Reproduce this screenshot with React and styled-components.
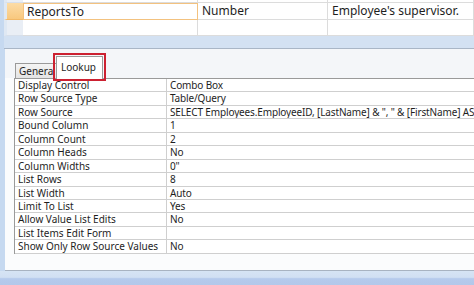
import React from 'react'
import styled, { createGlobalStyle } from 'styled-components'

const GlobalStyle = createGlobalStyle`
    html, body {
        margin: 0;
        padding: 0;
        background: #ffffff;
    }
    body {
        font-family: "Noto Sans", "Open Sans", sans-serif;
        color: #1e1e1e;
    }
`

const fields = [
    { name: '', type: '', desc: '', height: 3 },
    { name: 'ReportsTo', type: 'Number', desc: "Employee's supervisor.", height: 17, selected: true },
    { name: '', type: '', desc: '', height: 16 },
]

const properties = [
    ['Display Control', 'Combo Box'],
    ['Row Source Type', 'Table/Query'],
    ['Row Source', 'SELECT Employees.EmployeeID, [LastName] & ", " & [FirstName] AS'],
    ['Bound Column', '1'],
    ['Column Count', '2'],
    ['Column Heads', 'No'],
    ['Column Widths', '0"'],
    ['List Rows', '8'],
    ['List Width', 'Auto'],
    ['Limit To List', 'Yes'],
    ['Allow Value List Edits', 'No'],
    ['List Items Edit Form', ''],
    ['Show Only Row Source Values', 'No'],
]

export default function App() {
    return (
        <>
            <GlobalStyle />
            <Page>
                <Designer>
                    {fields.map((f, i) => (
                        <FieldRow key={i} $h={f.height}>
                            <Selector $selected={f.selected} />
                            <FieldCell $selected={f.selected}>{f.name}</FieldCell>
                            <FieldCell>{f.type}</FieldCell>
                            <FieldCell>{f.desc}</FieldCell>
                        </FieldRow>
                    ))}
                    <Spacer />
                </Designer>
                <PropertySheet>
                    <TabStrip>
                        <Tab>Genera</Tab>
                        <Tab $active>
                            Lookup
                            <Highlight />
                        </Tab>
                    </TabStrip>
                    <PropGrid>
                        {properties.map(([label, value]) => (
                            <PropRow key={label}>
                                <PropLabel>{label}</PropLabel>
                                <PropValue>{value}</PropValue>
                            </PropRow>
                        ))}
                    </PropGrid>
                </PropertySheet>
                <BottomBand />
            </Page>
        </>
    )
}

const Page = styled.div`
    width: 474px;
    height: 285px;
    overflow: hidden;
    display: flex;
    flex-direction: column;
    background: #c6d9f0;
    padding-left: 4px;
    box-sizing: border-box;
`

const Designer = styled.div`
    display: flex;
    flex-direction: column;
    background: #d5e3f3;
`

const FieldRow = styled.div`
    display: grid;
    grid-template-columns: 19px 175px 130px 1fr;
    height: ${p => p.$h}px;
    background: #ffffff;
`

const Selector = styled.div`
    background: ${p => p.$selected ? 'linear-gradient(#fcdca6, #f8c87e)' : '#e9eef5'};
    border-left: 3px solid #dfe8f3;
    border-bottom: 1px solid ${p => p.$selected ? '#f1b867' : '#d7dfea'};
`

const FieldCell = styled.div`
    font-size: 12px;
    line-height: 16px;
    padding-left: 4px;
    white-space: nowrap;
    overflow: hidden;
    border-right: 1px solid #dcdcdc;
    border-bottom: 1px solid #dcdcdc;
    ${p => p.$selected && `
        border: 1px solid #f3c27f;
        padding-left: 3px;
        line-height: 15px;
    `}
`

const Spacer = styled.div`
    height: 12px;
    background: #d3e1f2;
    border-bottom: 1px solid #a9b6c6;
`

const PropertySheet = styled.div`
    flex: 1;
    display: flex;
    flex-direction: column;
    margin-left: 1px;
    padding-left: 9px;
    background: #fbfcfd;
    border-bottom: 1px solid #a8b3c1;
`

const TabStrip = styled.div`
    display: flex;
    align-items: flex-end;
    height: 29px;
    background: #f4f6f9;
    margin-left: -9px;
    padding-left: 10px;
`

const Tab = styled.div`
    position: relative;
    font-size: 10px;
    line-height: ${p => p.$active ? '20px' : '14px'};
    height: ${p => p.$active ? '23px' : '15px'};
    padding: ${p => p.$active ? '0 6px 0 4px' : '0 0 0 3px'};
    width: ${p => p.$active ? 'auto' : '41px'};
    overflow: ${p => p.$active ? 'visible' : 'hidden'};
    box-sizing: border-box;
    border: 1px solid #9a9a9a;
    border-bottom: none;
    border-right: ${p => p.$active ? '1px solid #9a9a9a' : 'none'};
    background: ${p => p.$active ? '#ffffff' : 'linear-gradient(#f4f4f4, #e4e4e4)'};
    margin-bottom: ${p => p.$active ? '-1px' : '0'};
    z-index: ${p => p.$active ? 1 : 0};
    white-space: nowrap;
`

const Highlight = styled.span`
    position: absolute;
    left: -4px;
    top: -4px;
    right: -4px;
    bottom: -2px;
    border: 2px solid #cc2131;
    pointer-events: none;
`

const PropGrid = styled.div`
    display: flex;
    flex-direction: column;
    border-top: 1px solid #9a9a9a;
    border-left: 1px solid #9a9a9a;
    background: #ffffff;
    margin-right: -20px;
`

const PropRow = styled.div`
    display: grid;
    grid-template-columns: 152px 1fr;
    height: 13.45px;
    border-bottom: 1px solid #cfcfcf;
    box-sizing: border-box;
    font-size: 10px;
    line-height: 12px;
`

const PropLabel = styled.div`
    padding-left: 3px;
    white-space: nowrap;
    border-right: 1px solid #cfcfcf;
`

const PropValue = styled.div`
    padding-left: 3px;
    white-space: nowrap;
    overflow: hidden;
    letter-spacing: -0.14px;
`

const BottomBand = styled.div`
    height: 14px;
    margin-left: -4px;
    background: linear-gradient(#d6e4f4 0%, #d1e0f3 45%, #b5caec 55%, #b3c8ea 100%);
`
